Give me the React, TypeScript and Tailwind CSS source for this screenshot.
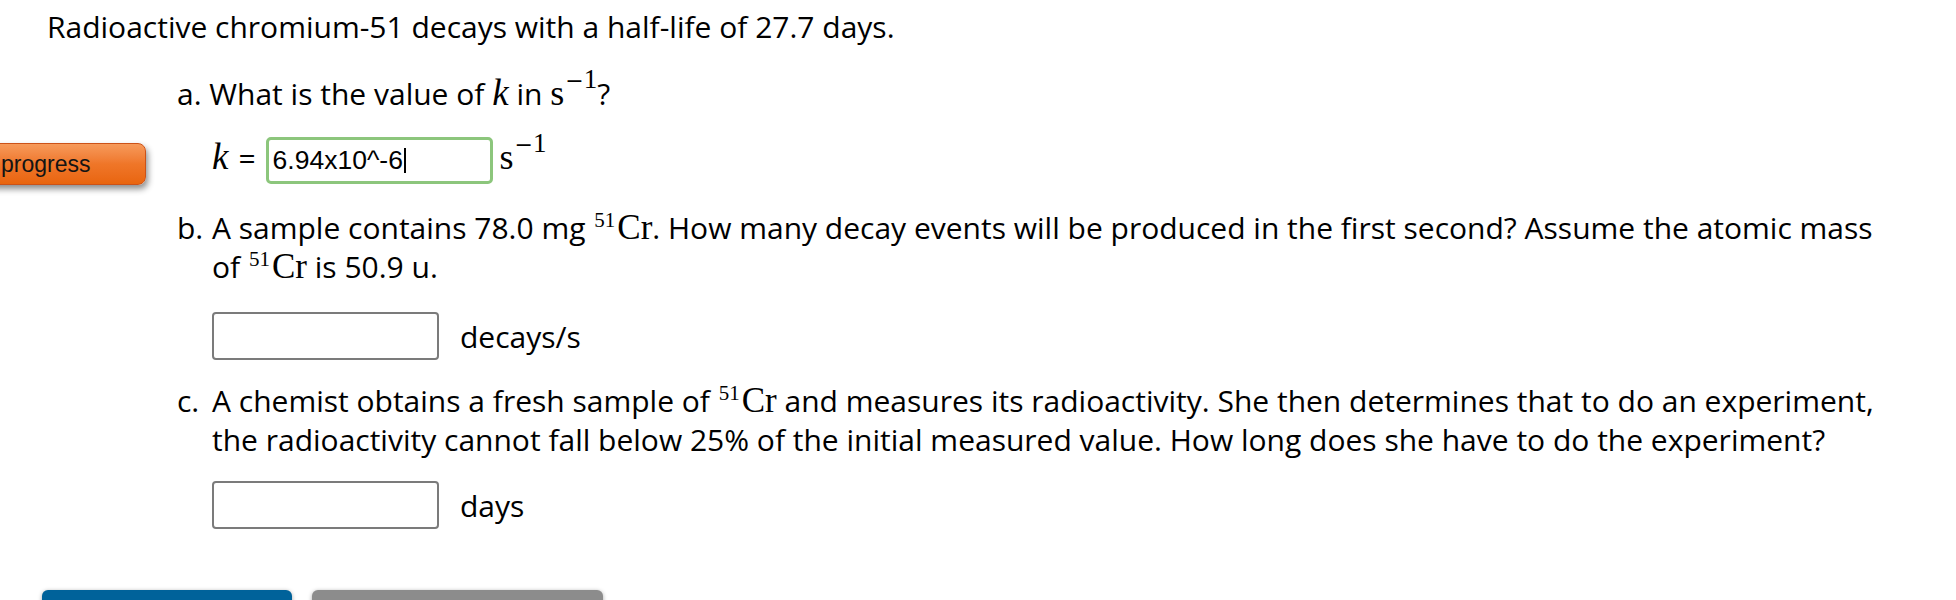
import type { ReactNode } from 'react';

// 51Cr with a raised mass number, math typeset in a serif face
function Cr() {
  return (
    <span className="font-['Liberation_Serif',serif] leading-[0]">
      <span className="ml-[1px] align-[12px] text-[21px]">51</span>
      <span className="ml-[2px] text-[35px]">Cr</span>
    </span>
  );
}

function PerSecond() {
  return (
    <span className="font-['Liberation_Serif',serif] leading-[0]">
      <span className="text-[36px]">s</span>
      <span className="ml-[1px] align-[17px] text-[27px]">
        <span className="font-['DejaVu_Serif',serif] text-[22px]">−</span>1
      </span>
    </span>
  );
}

function K() {
  return <span className="font-['Liberation_Serif',serif] text-[37px] italic leading-[0]">k</span>;
}

function AnswerBox() {
  return <div className="h-[48px] w-[227px] shrink-0 rounded-[4px] border-2 border-[#7b7b7b] bg-white" />;
}

function Part({ label, children }: { label: string; children: ReactNode }) {
  return (
    <div className="flex">
      <span className="w-[35px] shrink-0">{label}</span>
      <div className="min-w-0 flex-1">{children}</div>
    </div>
  );
}

export default function App() {
  return (
    <div className="relative min-h-screen overflow-hidden bg-white font-['Open_Sans',sans-serif] text-[30px] leading-[39px] text-black">
      {/* Side status tab, cut off at the left edge */}
      <div className="absolute left-[-24px] top-[143px] flex h-[42px] w-[170px] items-center rounded-[8px] border border-[#cc5218] bg-linear-to-b from-[#f69a5a] via-[#ef7628] to-[#e9650e] pl-[24px] font-['Liberation_Sans',Arial,sans-serif] text-[23px] leading-none text-[#141414] shadow-[2px_4px_6px_rgba(0,0,0,0.45)]">
        progress
      </div>

      <p className="pl-[47px] pt-[7px]">Radioactive chromium-51 decays with a half-life of 27.7 days.</p>

      <div className="pl-[177px] pr-[50px]">
        <p className="mt-[28px]">
          a. What is the value of <K /> in <PerSecond />?
        </p>

        <div className="ml-[35px] mt-[24px] flex items-baseline">
          <K />
          <span className="ml-[10px]">=</span>
          <div className="ml-[10px] flex h-[47px] w-[227px] items-center rounded-[5px] border-[3px] border-[#8cc67c] pl-[4px] font-['Liberation_Sans',Arial,sans-serif] text-[26.5px]">
            6.94x10^-6
            <span className="ml-[1px] h-[25px] w-[2px] bg-black" />
          </div>
          <div className="ml-[7px]">
            <PerSecond />
          </div>
        </div>

        <div className="mt-[24px]">
          <Part label="b.">
            <p>
              A sample contains 78.0 mg <Cr />. How many decay events will be produced in the first second? Assume the
              atomic mass
              <br />
              of <Cr /> is 50.9 u.
            </p>
            <div className="mt-[26px] flex items-center gap-[21px]">
              <AnswerBox />
              <span>decays/s</span>
            </div>
          </Part>
        </div>

        <div className="mt-[21px]">
          <Part label="c.">
            <p>
              A chemist obtains a fresh sample of <Cr /> and measures its radioactivity. She then determines that to do an
              experiment, the radioactivity cannot fall below 25% of the initial measured value. How long does she have to
              do the experiment?
            </p>
            <div className="mt-[22px] flex items-center gap-[21px]">
              <AnswerBox />
              <span>days</span>
            </div>
          </Part>
        </div>
      </div>

      {/* Action buttons, only their tops are in view */}
      <div className="mt-[61px] flex gap-[20px] pl-[42px]">
        <div className="h-[50px] w-[250px] rounded-[6px] bg-[#00629a] shadow-[0_1px_4px_rgba(0,0,0,0.35)]" />
        <div className="h-[50px] w-[291px] rounded-[6px] bg-[#8c8c8c] shadow-[0_1px_4px_rgba(0,0,0,0.35)]" />
      </div>
    </div>
  );
}
